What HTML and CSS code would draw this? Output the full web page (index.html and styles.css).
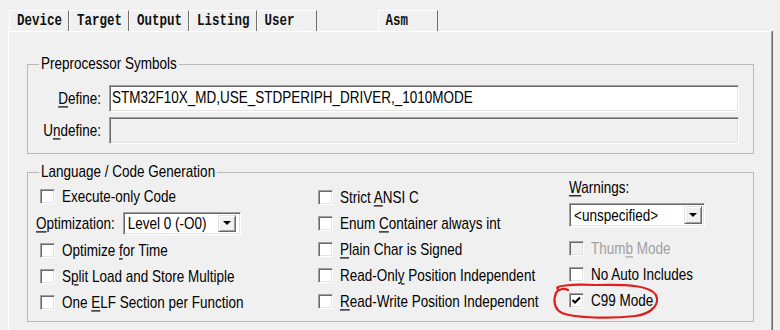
FILE: index.html
```html
<!DOCTYPE html>
<html lang="en">
<head>
    <meta charset="UTF-8">
    <meta name="viewport" content="width=device-width, initial-scale=1.0">
    <title>Options - C/C++</title>
    <link rel="stylesheet" href="styles.css">
</head>
<body>
    <div class="tabs">
        <div class="tab"><span>Device</span></div>
        <div class="tab"><span>Target</span></div>
        <div class="tab"><span>Output</span></div>
        <div class="tab"><span>Listing</span></div>
        <div class="tab"><span>User</span></div>
        <div class="tab-gap"></div>
        <div class="tab"><span>Asm</span></div>
    </div>

    <div class="panel">
        <fieldset class="group">
            <legend><span class="lbl">Preprocessor Symbols</span></legend>
            <div class="symbols">
                <label class="sym-label"><span class="lbl"><u>D</u>efine:</span></label>
                <div class="edit"><span class="lbl">STM32F10X_MD,USE_STDPERIPH_DRIVER,_1010MODE</span></div>
                <label class="sym-label"><span class="lbl">U<u>n</u>define:</span></label>
                <div class="edit disabled"></div>
            </div>
        </fieldset>

        <fieldset class="group lang">
            <legend><span class="lbl">Language / Code Generation</span></legend>
            <div class="cols">
                <div class="col col-left">
                    <div class="check"><span class="box"></span><span class="lbl">Execute-only Code</span></div>
                    <div class="opt-row">
                        <span class="lbl"><u>O</u>ptimization:</span>
                        <div class="combo level">
                            <span class="value"><span class="lbl">Level 0 (-O0)</span></span>
                            <span class="drop"></span>
                        </div>
                    </div>
                    <div class="check"><span class="box"></span><span class="lbl">Optimize <u>f</u>or Time</span></div>
                    <div class="check"><span class="box"></span><span class="lbl">S<u>p</u>lit Load and Store Multiple</span></div>
                    <div class="check"><span class="box"></span><span class="lbl">One <u>E</u>LF Section per Function</span></div>
                </div>
                <div class="col col-mid">
                    <div class="check"><span class="box"></span><span class="lbl">Strict <u>A</u>NSI C</span></div>
                    <div class="check"><span class="box"></span><span class="lbl">Enum <u>C</u>ontainer always int</span></div>
                    <div class="check"><span class="box"></span><span class="lbl"><u>P</u>lain Char is Signed</span></div>
                    <div class="check"><span class="box"></span><span class="lbl">Read-Onl<u>y</u> Position Independent</span></div>
                    <div class="check"><span class="box"></span><span class="lbl"><u>R</u>ead-Write Position Independent</span></div>
                </div>
                <div class="col col-right">
                    <div class="warn-label"><span class="lbl"><u>W</u>arnings:</span></div>
                    <div class="combo warnings">
                        <span class="value"><span class="lbl">&lt;unspecified&gt;</span></span>
                        <span class="drop"></span>
                    </div>
                    <div class="right-checks">
                        <div class="check off"><span class="box"></span><span class="lbl">Thum<u>b</u> Mode</span></div>
                        <div class="check"><span class="box"></span><span class="lbl">No Auto Includes</span></div>
                        <div class="check"><span class="box checked"><svg width="13" height="13" viewBox="0 0 13 13"><path d="M2.5 6 L5 8.5 L10 3.5" fill="none" stroke="#000" stroke-width="2"/></svg></span><span class="lbl">C99 Mode</span></div>
                    </div>
                </div>
            </div>
        </fieldset>
    </div>

    <!-- red pen mark around C99 Mode -->
    <svg class="mark" width="112" height="42" viewBox="0 0 112 42">
        <path d="M8 9 C3 6 20 4 45 5 C80 4 100 6 106 15 C110 24 102 34 85 36 C60 39 25 38 12 33 C4 29 3 20 6 13 C8 9 14 8 18 10" fill="none" stroke="#dd1f1f" stroke-width="2.2" stroke-linecap="round"/>
    </svg>
</body>
</html>
```

FILE: styles.css
```css
body
{
    margin: 0;
    width: 780px;
    height: 330px;
    overflow: hidden;
    background: #f0f0f0;
    color: #000;
    font-family: "Liberation Sans", Arial, sans-serif;
    font-size: 13.5px;
}
u
{
    text-decoration-thickness: 1px;
    text-underline-offset: 2px;
}
/* the screenshot is a little taller than wide, so the glyphs are too */
.lbl
{
    display: inline-block;
    transform: scaleY(1.2);
}

/* tab strip */
.tabs
{
    display: flex;
    height: 21px;
    margin: 10px 0 0 9px;
}
.tab
{
    box-sizing: border-box;
    min-width: 60px;
    height: 21px;
    padding: 0 6px 0 7px;
    border-top: 1px solid #fff;
    border-left: 1px solid #fff;
    border-right: 1px solid #6d6d6d;
    font: bold 12.5px "Liberation Mono", monospace;
    line-height: 20px;
    color: #111;
}
.tab span
{
    display: inline-block;
    transform: scaleY(1.25);
}
.tab-gap
{
    width: 61px;
}

/* page */
.panel
{
    box-sizing: border-box;
    width: 764px;
    height: 299px;
    margin-left: 8px;
    padding: 24px 17px 0 18px;
    border-top: 1px solid #fff;
    border-left: 1px solid #fff;
    border-right: 1px solid #a0a0a0;
    box-shadow: 1px 0 0 #696969;
}
.group
{
    margin: 0;
    min-width: 0;
    padding: 0 14px 0 11px;
    border: 1px solid #b9b9b9;
}
.group legend
{
    padding: 0 2px;
    line-height: 16px;
}
.symbols
{
    display: grid;
    grid-template-columns: 62px 1fr;
    column-gap: 8px;
    row-gap: 5px;
    align-items: center;
    padding: 13px 0 9px;
}
.sym-label
{
    text-align: right;
}
.edit
{
    box-sizing: border-box;
    height: 27px;
    padding: 0 2px;
    background: #fff;
    border: 1px solid;
    border-color: #a0a0a0 #fff #fff #a0a0a0;
    box-shadow: inset 1px 1px 0 #696969, inset -1px -1px 0 #e3e3e3;
    line-height: 24px;
    white-space: nowrap;
}
.edit.disabled
{
    background: #f0f0f0;
}

/* language / code generation */
.lang
{
    margin-top: 10px;
    padding-left: 8px;
}
.lang legend
{
    margin-left: 3px;
}
.cols
{
    display: grid;
    grid-template-columns: 282px 251px 1fr;
    padding-bottom: 6px;
}
.col-left
{
    padding-top: 3px;
}
.col-left .check
{
    margin-left: 4px;
}
.col-mid
{
    padding-top: 4px;
}
.check
{
    display: flex;
    align-items: center;
    gap: 7px;
    height: 26px;
    white-space: nowrap;
}
.box
{
    flex: none;
    box-sizing: border-box;
    width: 15px;
    height: 15px;
    background: #fff;
    border: 1px solid;
    border-color: #a0a0a0 #fff #fff #a0a0a0;
    box-shadow: inset 1px 1px 0 #696969, inset -1px -1px 0 #e3e3e3;
}
.box svg
{
    display: block;
}
.check.off
{
    color: #a0a0a0;
}
.check.off .box
{
    background: #f0f0f0;
}
.opt-row
{
    display: flex;
    align-items: center;
    gap: 8px;
    height: 28px;
}
.combo
{
    display: flex;
    align-items: center;
    box-sizing: border-box;
    padding: 2px;
    background: #fff;
    border: 1px solid;
    border-color: #a0a0a0 #fff #fff #a0a0a0;
    box-shadow: inset 1px 1px 0 #696969, inset -1px -1px 0 #e3e3e3;
    white-space: nowrap;
}
.combo .value
{
    flex: 1;
    padding-left: 2px;
}
.combo.level
{
    width: 118px;
    height: 23px;
    padding-right: 4px;
}
.combo.warnings
{
    width: 136px;
    height: 24px;
    margin-top: 7px;
}
.drop
{
    display: flex;
    align-items: center;
    justify-content: center;
    align-self: stretch;
    box-sizing: border-box;
    width: 18px;
    background: #f0f0f0;
    border: 1px solid;
    border-color: #e3e3e3 #696969 #696969 #e3e3e3;
    box-shadow: inset 1px 1px 0 #fff, inset -1px -1px 0 #a0a0a0;
}
.drop::after
{
    content: "";
    border-left: 4px solid transparent;
    border-right: 4px solid transparent;
    border-top: 4px solid #000;
}
.warn-label
{
    line-height: 16px;
}
.right-checks
{
    margin-top: 8px;
}

.mark
{
    position: absolute;
    left: 550px;
    top: 280px;
}
```
